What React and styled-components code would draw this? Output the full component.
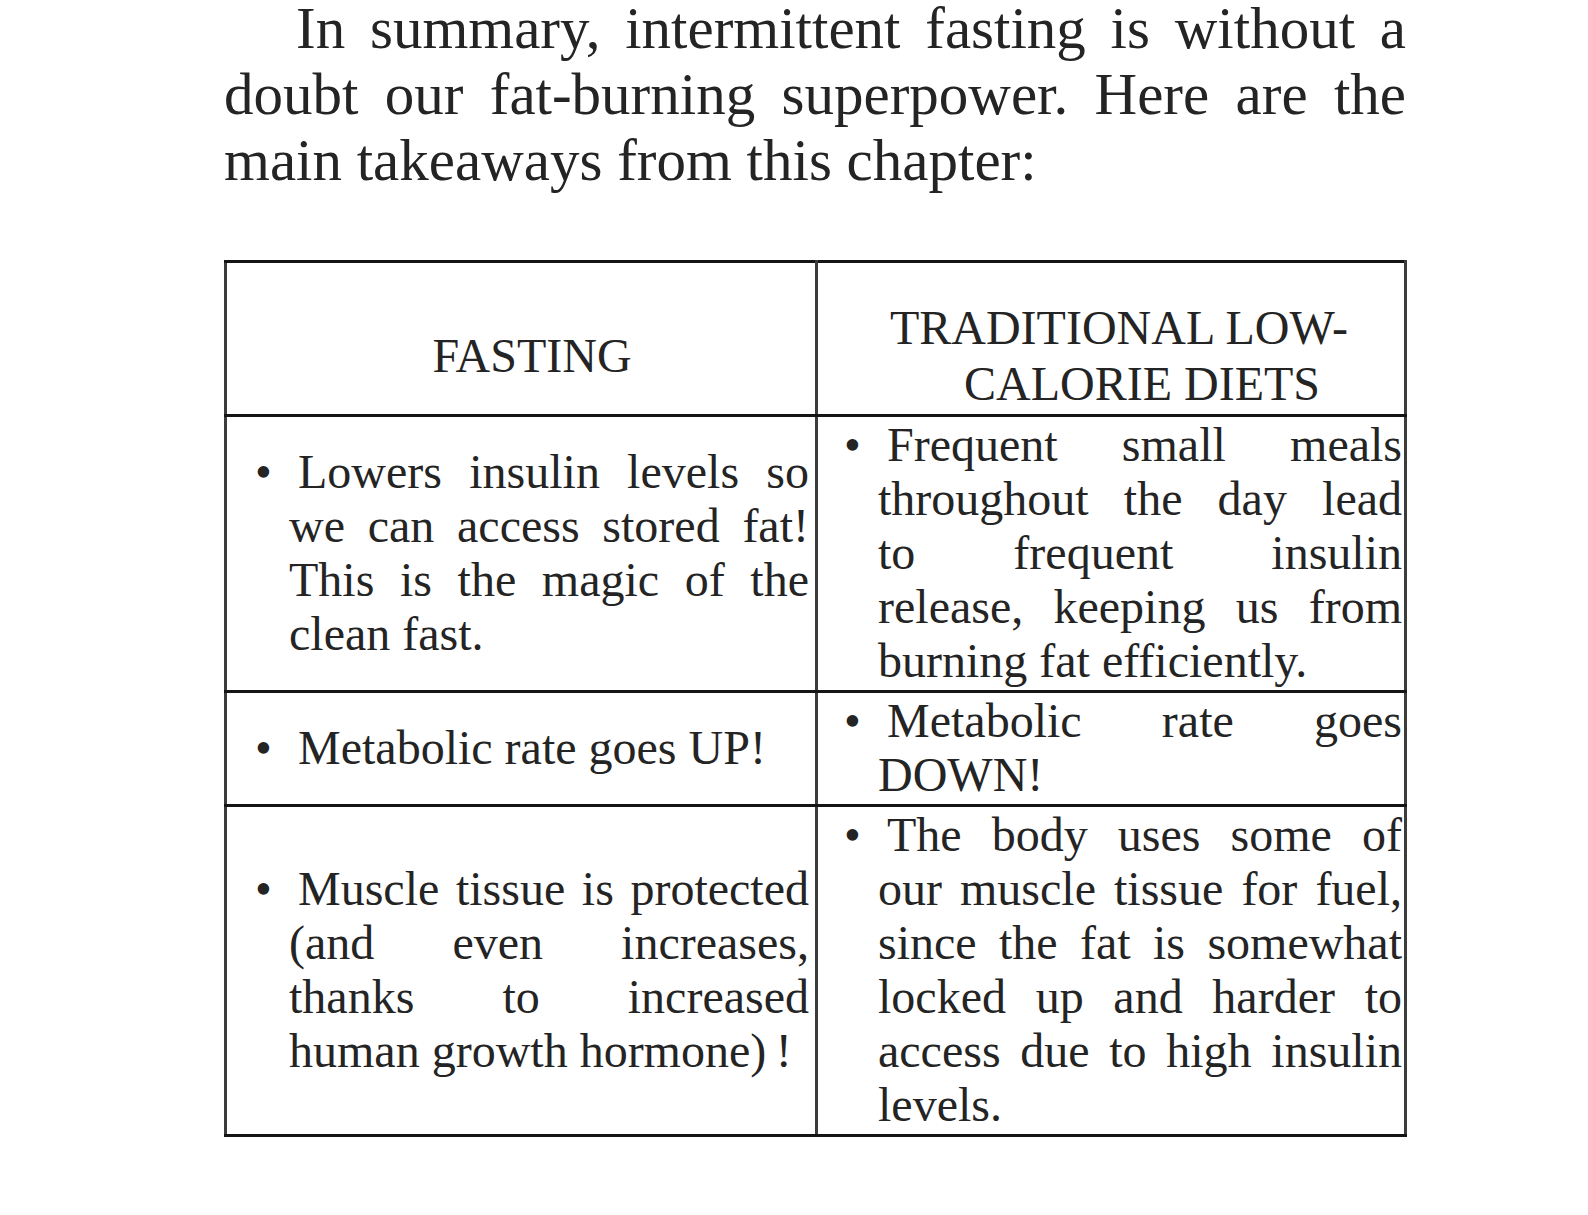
import styled, { createGlobalStyle } from "styled-components";

const GlobalStyle = createGlobalStyle`
  html, body {
    margin: 0;
    padding: 0;
    background: #ffffff;
  }
  body {
    font-family: "Liberation Serif", "Times New Roman", serif;
    color: #242424;
  }
`;

const Page = styled.div`
  width: 1182px;
  padding-left: 224px;
`;

const Summary = styled.p`
  margin: -5px 0 0 0;
  font-size: 59px;
  line-height: 66px;
  text-align: justify;
  text-indent: 72px;
`;

const Table = styled.table`
  margin-top: 67px;
  width: 1180px;
  border-collapse: collapse;
  table-layout: fixed;
  font-size: 48px;
`;

const HeadCell = styled.th`
  font-weight: normal;
  line-height: 56px;
  text-align: center;
  vertical-align: middle;
  padding: 37px 0 2px ${(p) => p.$shift}px;
  border-top: 3px solid #151515;
  border-bottom: 3px solid #151515;
  border-left: 3px solid #3c3c3c;
  border-right: 3px solid #3c3c3c;
`;

const HeadLine = styled.span`
  display: block;
  padding-left: ${(p) => p.$shift || 0}px;
`;

const Cell = styled.td`
  line-height: 54px;
  vertical-align: middle;
  padding: 1px 0 2px 0;
  border-top: 3px solid #151515;
  border-bottom: 3px solid #151515;
  border-left: 3px solid #3c3c3c;
  border-right: 3px solid #3c3c3c;
`;

const Item = styled.div`
  padding-left: ${(p) => p.$indent}px;
  padding-right: ${(p) => p.$right}px;
`;

const Line = styled.span`
  display: block;
  text-align: ${(p) => (p.$fill ? "justify" : "left")};
  text-align-last: ${(p) => (p.$fill ? "justify" : "left")};
  margin-left: ${(p) => (p.$lead ? "-34px" : "0")};
`;

const Bullet = styled.span`
  display: inline-block;
  width: 43px;
`;

const rows = [
  {
    left: ["Lowers insulin levels so", "we can access stored fat!", "This is the magic of the", "clean fast."],
    right: [
      "Frequent small meals",
      "throughout the day lead",
      "to frequent insulin",
      "release, keeping us from",
      "burning fat efficiently.",
    ],
  },
  {
    left: ["Metabolic rate goes UP!"],
    right: ["Metabolic rate goes", "DOWN!"],
  },
  {
    left: [
      "Muscle tissue is protected",
      "(and even increases,",
      "thanks to increased",
      "human growth hormone)\u2009!",
    ],
    right: [
      "The body uses some of",
      "our muscle tissue for fuel,",
      "since the fat is somewhat",
      "locked up and harder to",
      "access due to high insulin",
      "levels.",
    ],
  },
];

function BulletText({ lines, indent, right }) {
  return (
    <Item $indent={indent} $right={right}>
      {lines.map((text, i) => (
        <Line key={i} $lead={i === 0} $fill={i < lines.length - 1}>
          {i === 0 && <Bullet>•</Bullet>}
          {text}
        </Line>
      ))}
    </Item>
  );
}

export default function App() {
  return (
    <>
      <GlobalStyle />
      <Page>
        <Summary>
          In summary, intermittent fasting is without a doubt our fat-burning
          superpower. Here are the main takeaways from this chapter:
        </Summary>
        <Table>
          <colgroup>
            <col style={{ width: "591px" }} />
            <col style={{ width: "589px" }} />
          </colgroup>
          <thead>
            <tr>
              <HeadCell $shift={22}>FASTING</HeadCell>
              <HeadCell $shift={16}>
                <HeadLine>TRADITIONAL LOW-</HeadLine>
                <HeadLine $shift={46}>CALORIE DIETS</HeadLine>
              </HeadCell>
            </tr>
          </thead>
          <tbody>
            {rows.map((row, i) => (
              <tr key={i}>
                <Cell>
                  <BulletText lines={row.left} indent={62} right={6} />
                </Cell>
                <Cell>
                  <BulletText lines={row.right} indent={60} right={2} />
                </Cell>
              </tr>
            ))}
          </tbody>
        </Table>
      </Page>
    </>
  );
}
